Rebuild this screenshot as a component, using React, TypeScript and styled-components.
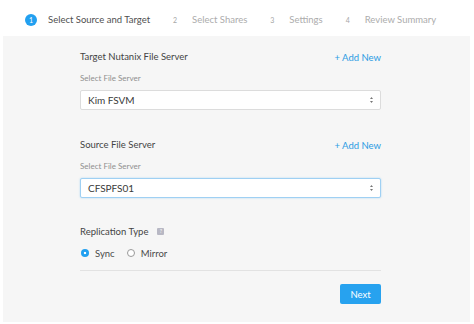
import React, { useState } from 'react';
import styled, { createGlobalStyle } from 'styled-components';

const GlobalStyle = createGlobalStyle`
  * { box-sizing: border-box; }
  html, body { margin: 0; padding: 0; background: #ffffff; }
  body {
    font-family: 'Lato', 'Liberation Sans', sans-serif;
    color: #333;
    -webkit-font-smoothing: antialiased;
  }
`;

const Page = styled.div`
  width: 474px;
  height: 324px;
  display: flex;
  flex-direction: column;
  background: #fff;
`;

const Steps = styled.div`
  height: 36px;
  display: flex;
  align-items: center;
  padding: 3px 0 0 25px;
  white-space: nowrap;
`;

const Step = styled.div`
  display: flex;
  align-items: center;
  margin-right: 19px;
`;

const StepNum = styled.span<{ $active?: boolean }>`
  width: 12px;
  height: 12px;
  border-radius: 50%;
  display: inline-flex;
  align-items: center;
  justify-content: center;
  font-size: 7px;
  color: ${p => (p.$active ? '#fff' : '#a6a6a6')};
  background: ${p => (p.$active ? '#22a0f0' : 'transparent')};
  margin-right: 11px;
`;

const StepLabel = styled.span<{ $active?: boolean }>`
  font-size: 9.5px;
  color: ${p => (p.$active ? '#505050' : '#acacac')};
`;

const Panel = styled.div`
  flex: 1;
  margin: 0 4px 2px 3px;
  background: #f6f6f6;
  padding: 13px 0 0 77px;
`;

const Form = styled.div`
  width: 301px;
  display: flex;
  flex-direction: column;
`;

const Section = styled.div<{ $gap?: number }>`
  display: flex;
  flex-direction: column;
  margin-bottom: ${p => p.$gap ?? 27}px;
`;

const SectionHead = styled.div`
  display: flex;
  justify-content: space-between;
  align-items: center;
  height: 14px;
  white-space: nowrap;
`;

const Heading = styled.div`
  font-size: 9.5px;
  color: #444;
  display: flex;
  align-items: center;
`;

const AddLink = styled.a`
  font-size: 9.5px;
  color: #2b9be3;
  text-decoration: none;
  position: relative;
  top: 1px;
`;

const FieldLabel = styled.div`
  font-size: 8px;
  line-height: 10px;
  color: #8f8f8f;
  margin: 10px 0 7px;
`;

const SelectBox = styled.div<{ $focused?: boolean }>`
  height: 20px;
  background: #fff;
  border: 1px solid ${p => (p.$focused ? '#9fd0f3' : '#dcdcdc')};
  border-radius: 2px;
  display: flex;
  align-items: center;
  justify-content: space-between;
  padding: 0 6px 0 7px;
  font-size: 10px;
  color: #3a3a3a;
  box-shadow: ${p => (p.$focused ? '0 0 2px rgba(34,160,240,0.35)' : 'none')};
`;

const Help = styled.span`
  width: 7px;
  height: 7px;
  background: #b8b8c4;
  border-radius: 1px;
  margin-left: 9px;
  font-size: 5px;
  color: #fff;
  display: inline-flex;
  align-items: center;
  justify-content: center;
`;

const Radios = styled.div`
  display: flex;
  align-items: center;
  height: 12px;
  margin-top: 9px;
  padding-left: 1px;
`;

const RadioItem = styled.label`
  display: flex;
  align-items: center;
  font-size: 9.5px;
  color: #4a4a4a;
  margin-right: 12px;
  cursor: pointer;
`;

const Dot = styled.span<{ $on?: boolean }>`
  width: 8px;
  height: 8px;
  border-radius: 50%;
  margin-right: 6px;
  border: ${p => (p.$on ? 'none' : '1px solid #9a9a9a')};
  background: ${p =>
    p.$on ? 'radial-gradient(circle, #fff 0 1.3px, #22a0f0 1.6px)' : '#fff'};
`;

const Divider = styled.div`
  height: 1px;
  background: #e2e2e2;
  margin-top: 11px;
`;

const Footer = styled.div`
  display: flex;
  justify-content: flex-end;
  margin-top: 13px;
`;

const NextButton = styled.button`
  width: 41px;
  height: 20px;
  border: none;
  border-radius: 2px;
  background: #27a2ef;
  color: #fff;
  font-family: inherit;
  font-size: 9.5px;
  padding: 0;
  cursor: pointer;
`;

const Arrows = () => (
  <svg width="5" height="8" viewBox="0 0 5 8">
    <path d="M2.5 1 L4 3 L1 3 Z" fill="#777" />
    <path d="M2.5 7 L4 5 L1 5 Z" fill="#777" />
  </svg>
);

const steps = ['Select Source and Target', 'Select Shares', 'Settings', 'Review Summary'];

const App: React.FC = () => {
  const [mode, setMode] = useState<'sync' | 'mirror'>('sync');

  return (
    <Page>
      <GlobalStyle />
      <Steps>
        {steps.map((s, i) => (
          <Step key={s}>
            <StepNum $active={i === 0}>{i + 1}</StepNum>
            <StepLabel $active={i === 0}>{s}</StepLabel>
          </Step>
        ))}
      </Steps>
      <Panel>
        <Form>
          <Section>
            <SectionHead>
              <Heading>Target Nutanix File Server</Heading>
              <AddLink>+ Add New</AddLink>
            </SectionHead>
            <FieldLabel>Select File Server</FieldLabel>
            <SelectBox>
              Kim FSVM
              <Arrows />
            </SelectBox>
          </Section>
          <Section $gap={26}>
            <SectionHead>
              <Heading>Source File Server</Heading>
              <AddLink>+ Add New</AddLink>
            </SectionHead>
            <FieldLabel>Select File Server</FieldLabel>
            <SelectBox $focused>
              CFSPFS01
              <Arrows />
            </SelectBox>
          </Section>
          <SectionHead>
            <Heading>
              Replication Type <Help>?</Help>
            </Heading>
          </SectionHead>
          <Radios>
            <RadioItem onClick={() => setMode('sync')}>
              <Dot $on={mode === 'sync'} />
              Sync
            </RadioItem>
            <RadioItem onClick={() => setMode('mirror')}>
              <Dot $on={mode === 'mirror'} />
              Mirror
            </RadioItem>
          </Radios>
          <Divider />
          <Footer>
            <NextButton>Next</NextButton>
          </Footer>
        </Form>
      </Panel>
    </Page>
  );
};

export default App;
